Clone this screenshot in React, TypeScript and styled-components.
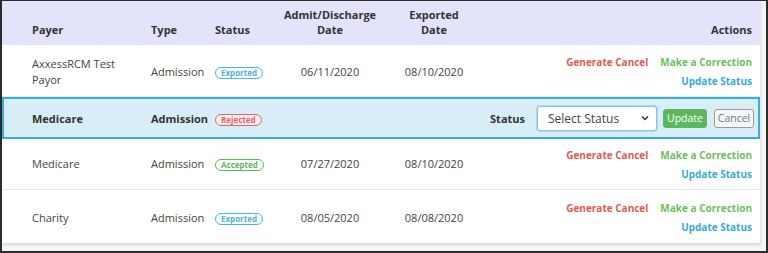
import React from "react";
import styled, { createGlobalStyle, css } from "styled-components";

const Global = createGlobalStyle`
  html, body { margin: 0; padding: 0; }
  body { font-family: "Open Sans", "Noto Sans", sans-serif; background: #ffffff; }
  * { box-sizing: border-box; }
`;

const Frame = styled.div`
  width: 768px;
  height: 253px;
  border-top: 1px solid #2b2b2b;
  border-left: 2px solid #2b2b2b;
  border-right: 2px solid #2b2b2b;
  border-bottom: 2px solid #2b2b2b;
  background: #f6f6f6;
  overflow: hidden;
  padding-right: 5px;
`;

const Card = styled.div`
  background: #ffffff;
  border-right: 1px solid #e2e2e8;
  box-shadow: 0 2px 3px rgba(0, 0, 0, 0.12);
  height: 242px;
`;

const cols = "30px 119px 64px 68px 94px 114px 1fr 8px";

const HeaderRow = styled.div`
  display: grid;
  grid-template-columns: ${cols};
  align-items: end;
  height: 44px;
  padding-bottom: 8px;
  background: #e4e3fc;
  color: #333333;
  font-size: 11px;
  font-weight: 700;
  line-height: 15px;
`;

const HeadCell = styled.div<{ $col: number; $align?: string }>`
  grid-column: ${(p) => p.$col};
  text-align: ${(p) => p.$align || "left"};
`;

const Row = styled.div<{ $h: number; $last?: boolean }>`
  display: grid;
  grid-template-columns: ${cols};
  align-items: center;
  height: ${(p) => p.$h}px;
  padding-top: ${(p) => (p.$h > 51 ? 2 : 0)}px;
  border-bottom: ${(p) => (p.$last ? "none" : "1px solid #e6e6ee")};
  color: #444444;
  font-size: 11px;
  line-height: 16px;
`;

const EditRow = styled.div`
  display: grid;
  grid-template-columns: 28px 119px 64px 68px 1fr 4px;
  align-items: center;
  height: 42px;
  border: 2px solid #3aaed6;
  background: #d8eef7;
  color: #333333;
  font-size: 11px;
  font-weight: 700;
`;

const Cell = styled.div<{ $col: number; $align?: string }>`
  grid-column: ${(p) => p.$col};
  text-align: ${(p) => p.$align || "left"};
`;

const badgeColors = {
  exported: "#4ab6dc",
  rejected: "#e0666a",
  accepted: "#5cb85c",
};

const Badge = styled.span<{ $kind: keyof typeof badgeColors }>`
  display: inline-block;
  font-size: 8px;
  font-weight: 700;
  line-height: 10px;
  padding: 0 5px;
  border-radius: 6px;
  border: 1px solid ${(p) => badgeColors[p.$kind]};
  color: ${(p) => badgeColors[p.$kind]};
  background: #ffffff;
  ${(p) =>
    p.$kind === "rejected" &&
    css`
      background: #fdeff0;
    `}
`;

const Actions = styled.div`
  grid-column: 7;
  display: flex;
  flex-direction: column;
  align-items: flex-end;
  gap: 3px;
  font-size: 10px;
  font-weight: 700;
  line-height: 16px;
`;

const ActionLine = styled.div`
  display: flex;
  gap: 12px;
`;

const actionColors = { red: "#e05a52", green: "#6cbf5c", blue: "#3aaad8" };

const ActionLink = styled.span<{ $c: keyof typeof actionColors }>`
  color: ${(p) => actionColors[p.$c]};
  cursor: pointer;
`;

const Editor = styled.div`
  grid-column: 5;
  display: flex;
  justify-content: flex-end;
  align-items: center;
`;

const EditLabel = styled.span`
  margin-right: 12px;
`;

const SelectBox = styled.div`
  width: 120px;
  height: 25px;
  border: 1px solid #8fc1e6;
  border-radius: 3px;
  background: #ffffff;
  box-shadow: 0 0 0 1px rgba(102, 175, 233, 0.35);
  display: flex;
  align-items: center;
  justify-content: space-between;
  padding: 0 6px 0 10px;
  font-weight: 400;
  font-size: 12px;
  color: #444;
`;

const Btn = styled.button<{ $primary?: boolean }>`
  font-family: inherit;
  font-size: 10.5px;
  font-weight: 400;
  height: 19px;
  line-height: 17px;
  padding: 0;
  border-radius: 3px;
  cursor: pointer;
  ${(p) =>
    p.$primary
      ? css`
          margin-left: 6px;
          width: 44px;
          background: #5cb85c;
          border: 1px solid #5cb85c;
          color: #ffffff;
        `
      : css`
          margin-left: 7px;
          width: 40px;
          background: #f4f8fa;
          border: 1px solid #9a9a9a;
          color: #777777;
        `}
`;

type R = {
  payer: string;
  status: "exported" | "accepted";
  label: string;
  admit: string;
  exported: string;
  h: number;
};

const rows1: R[] = [
  { payer: "AxxessRCM Test\nPayor", status: "exported", label: "Exported", admit: "06/11/2020", exported: "08/10/2020", h: 52 },
];
const rows2: R[] = [
  { payer: "Medicare", status: "accepted", label: "Accepted", admit: "07/27/2020", exported: "08/10/2020", h: 51 },
  { payer: "Charity", status: "exported", label: "Exported", admit: "08/05/2020", exported: "08/08/2020", h: 53 },
];

const Payer = styled.div`
  grid-column: 2;
  white-space: pre-line;
`;

function DataRow({ r, last }: { r: R; last?: boolean }) {
  return (
    <Row $h={r.h} $last={last}>
      <Payer>{r.payer}</Payer>
      <Cell $col={3}>Admission</Cell>
      <Cell $col={4}>
        <Badge $kind={r.status}>{r.label}</Badge>
      </Cell>
      <Cell $col={5} $align="center">{r.admit}</Cell>
      <Cell $col={6} $align="center">{r.exported}</Cell>
      <Actions>
        <ActionLine>
          <ActionLink $c="red">Generate Cancel</ActionLink>
          <ActionLink $c="green">Make a Correction</ActionLink>
        </ActionLine>
        <ActionLink $c="blue">Update Status</ActionLink>
      </Actions>
    </Row>
  );
}

export default function App() {
  return (
    <>
      <Global />
      <Frame>
        <Card>
          <HeaderRow>
            <HeadCell $col={2}>Payer</HeadCell>
            <HeadCell $col={3}>Type</HeadCell>
            <HeadCell $col={4}>Status</HeadCell>
            <HeadCell $col={5} $align="center">
              Admit/Discharge
              <br />
              Date
            </HeadCell>
            <HeadCell $col={6} $align="center">
              Exported
              <br />
              Date
            </HeadCell>
            <HeadCell $col={7} $align="right">Actions</HeadCell>
          </HeaderRow>
          {rows1.map((r) => (
            <DataRow key={r.payer} r={r} />
          ))}
          <EditRow>
            <Cell $col={2}>Medicare</Cell>
            <Cell $col={3}>Admission</Cell>
            <Cell $col={4}>
              <Badge $kind="rejected">Rejected</Badge>
            </Cell>
            <Editor>
              <EditLabel>Status</EditLabel>
              <SelectBox>
                <span>Select Status</span>
                <svg width="10" height="10" viewBox="0 0 10 10">
                  <path d="M2 3.5 L5 6.5 L8 3.5" fill="none" stroke="#333" strokeWidth="1.5" />
                </svg>
              </SelectBox>
              <Btn $primary>Update</Btn>
              <Btn>Cancel</Btn>
            </Editor>
          </EditRow>
          {rows2.map((r, i) => (
            <DataRow key={r.payer} r={r} last={i === rows2.length - 1} />
          ))}
        </Card>
      </Frame>
    </>
  );
}
